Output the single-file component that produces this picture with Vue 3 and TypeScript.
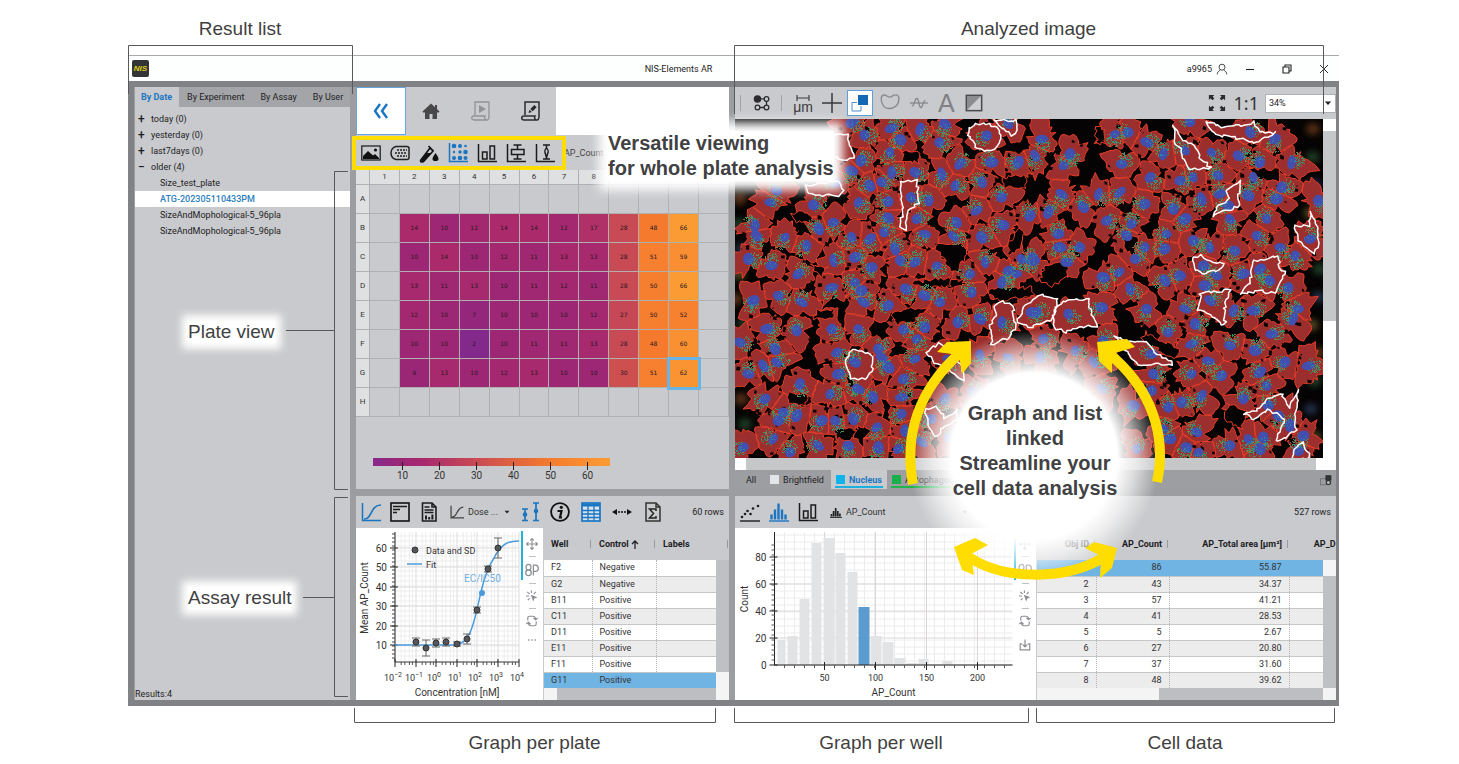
<script setup lang="ts">
type Point = [number, number]

/* ---------- icons (20 x 20 grid) ---------- */
const icons: Record<string, string> = {
  back: '<path d="M9 3 4 10l5 7M16 3l-5 7 5 7" fill="none" stroke="#1874c4" stroke-width="2.4"/>',
  home: '<path d="M10 2.5 1.5 10.5 3 12l1-1v7h4.500v-5h3v5H16v-7l1 1 1.500-1.500-2.500-2.400V4h-2v2.200z" fill="#48484a"/>',
  bookPlay: '<path d="M4 14V1h14v14M18 15c0 4-2 4-2 4H3c-3 0-3-4 0-4h11c-1 2 0 4 2 4" fill="none" stroke="#929395" stroke-width="1.300"/><path d="M8 4l7 4-7 4z" fill="#929395"/>',
  bookEdit: '<path d="M4 14V1h14v14M18 15c0 4-2 4-2 4H3c-3 0-3-4 0-4h11c-1 2 0 4 2 4" fill="none" stroke="#2c2c2e" stroke-width="1.500"/><path d="M7.500 12l1-3.200 2.400 2.300zM9.300 8l4-4 2.400 2.300-4 4z" fill="#2c2c2e"/>',
  picture: '<rect x=".8" y="3" width="18.400" height="14" fill="none" stroke="#222" stroke-width="1.300"/><path d="M2 16v-3l5-5 5 4.500 2-1.500 4 4v1z" fill="#111"/><circle cx="14.500" cy="7" r="1.600" fill="#111"/>',
  plate: '<path d="M6 3.500h11q2 0 2 2v9q0 2-2 2H6Q1 15 1 10t5-6.500z" fill="none" stroke="#222" stroke-width="1.500"/><path d="M7 7h10M5 10h12M7 13h10" stroke="#222" stroke-width="1.500" stroke-dasharray="2 1"/>',
  tube: '<path d="M9.500 3l5 5M1.500 17.500 11 5l3 3L4.500 18.500Q1.500 20 1.500 17.500z" fill="none" stroke="#111" stroke-width="1.600"/><path d="M2 17l6-7h4l-7.500 8q-2 1-2.500-1zM16.500 10q6 8 0 8t0-8z" fill="#111"/>',
  dots: '<path d="M1.500 0v18.500H20" fill="none" stroke="#1b76c2" stroke-width="1.500"/><g fill="#1b76c2"><circle cx="6" cy="3" r="2.300"/><circle cx="12" cy="3" r="2"/><circle cx="17.500" cy="3" r="1.300"/><circle cx="6" cy="9" r="1.200"/><circle cx="12" cy="9" r="1.700"/><circle cx="17.500" cy="9" r="2.300"/><circle cx="6" cy="15" r="2"/><circle cx="12" cy="15" r="2.300"/><circle cx="17.500" cy="15" r="2"/></g>',
  bars: '<path d="M1.500 1v17.500H20M5.500 16v-7h4.500v7zM13 16V3h4.500v13z" fill="none" stroke="#1c1c1e" stroke-width="1.500"/>',
  box: '<path d="M1.500 1v17.500H20M7.500 2h8M11.500 2v4M11.500 12v4M7.500 16h8M5.500 6.500h12.500v5H5.500z" fill="none" stroke="#1c1c1e" stroke-width="1.500"/>',
  violin: '<path d="M1.500 1v17.500H20M8 2h7M11.500 2v3c4 4 0 5 0 11M11.500 5c-4 4 0 5 0 11M8 16h7" fill="none" stroke="#1c1c1e" stroke-width="1.500"/>',
  curve: '<path d="M1.500 1v17.500H20" fill="none" stroke="#1b76c2" stroke-width="1.500"/><path d="M3 17c8 1 6-14 17-14" fill="none" stroke="#1b76c2" stroke-width="1.600"/>',
  curveGrey: '<path d="M1.500 1v17.500H20M3 17c8 1 6-14 16-14" fill="none" stroke="#444" stroke-width="1.800"/>',
  panel: '<rect x="1" y="1" width="18" height="18" fill="none" stroke="#1c1c1e" stroke-width="1.700"/><path d="M3 4.500h14M3 7.500h7M3 10.500h4" stroke="#1c1c1e" stroke-width="1.300"/>',
  report: '<path d="M3.500 1h9.500l4 4v14h-13.500zM13 1v4h4" fill="none" stroke="#1c1c1e" stroke-width="1.600"/><path d="M5.500 5h5M5.500 8h9M5.500 10.500h9" stroke="#1c1c1e" stroke-width="1.400"/><path d="M7 17.500v-4M10.200 17.500v-2.500M13.400 17.500v-5" stroke="#1c1c1e" stroke-width="2"/>',
  errors: '<g stroke="#1b76c2" stroke-width="1.700"><path d="M1 7h6M4 7v11M1 18.500h6M12 1h6M15 1v17M12 18.500h6"/></g><circle cx="4" cy="12.500" r="2.300" fill="#1b76c2"/><circle cx="15" cy="9" r="2.300" fill="#1b76c2"/>',
  info: '<circle cx="10" cy="10" r="8.900" fill="none" stroke="#111" stroke-width="1.800"/><circle cx="11.300" cy="5.300" r="1.600" fill="#111"/><path d="M7.500 9h4l-1.500 6.500h2" fill="none" stroke="#111" stroke-width="2.200"/>',
  grid: '<rect x="1" y="1" width="18" height="18" fill="#d5e3ef" stroke="#1b76c2" stroke-width="1.700"/><path d="M1 3h18" stroke="#1b76c2" stroke-width="3"/><path d="M1 8.500h18M1 12h18M1 15.500h18M7 4v15M13 4v15" stroke="#1b76c2" stroke-width="1.300"/>',
  arrows: '<path d="M3 10h14" stroke="#111" stroke-width="1.500" stroke-dasharray="2 1"/><path d="M0 10l5-3v6zM20 10l-5-3v6z" fill="#111"/>',
  sigma: '<path d="M3 1h10l4 4v14H3zM13 1v4h4" fill="none" stroke="#333" stroke-width="1.500"/><path d="M13 9V7H6.500l4 4.500-4 4.500H13v-2" fill="none" stroke="#222" stroke-width="1.500"/>',
  channels: '<circle cx="5" cy="5.500" r="4.200" fill="#2c2c2e"/><g fill="none" stroke="#2c2c2e" stroke-width="1.400"><circle cx="15" cy="5.500" r="2.600"/><circle cx="5" cy="15" r="2.600"/><circle cx="15" cy="15" r="2.600"/><path d="M7.600 15h4.800M15 8v4.400M9 5.500h3.500"/></g>',
  plus: '<path d="M10 0v20M0 10h20" stroke="#3a3a3c" stroke-width="1.500"/>',
  overlay: '<path d="M2 9.500v8.500h9v-5M2 9.500h5" fill="none" stroke="#4d8ecb" stroke-width="1"/><rect x="8" y="2" width="10" height="10" fill="#1467b3"/>',
  bean: '<path d="M2 3q2-2 5 0 3 2.500 6-.5 5-2 6 2.500 0 8-6.500 10Q6 17 3 12 0 6 2 3z" fill="none" stroke="#8a8b8e" stroke-width="1.400"/>',
  wave: '<path d="M0 10h20" stroke="#85868a" stroke-width="1.400"/><path d="M2 13c3 1 3-8 5.500-8 3 0 2 10 4.500 10s2-7 5-8" fill="none" stroke="#85868a" stroke-width="1.400"/>',
  contrast: '<rect x="1.500" y="1.500" width="17" height="17" fill="#cdced1" stroke="#4a4a4c" stroke-width="1.700"/><path d="M2.300 17.700V2.300h15.400z" fill="#8b8c8f"/>',
  expand: '<g fill="#2c2c2e"><path d="M1 1h6L5.300 3 7 5 5 7 3 5 1 6.500zM19 1v6l-2-1.700L15 7l-2-2 2-2-1.500-2zM1 19v-6l2 1.700L5 13l2 2-2 2 1.500 2zM19 19h-6l1.700-2L13 15l2-2 2 2 2-1.500z"/></g>',
  scatter: '<path d="M0 19h20" stroke="#1c1c1e" stroke-width="1.400"/><g fill="#1c1c1e"><circle cx="2" cy="15" r="1.300"/><circle cx="5" cy="12" r="1.300"/><circle cx="7.500" cy="9" r="1.300"/><circle cx="10.500" cy="12" r="1.300"/><circle cx="13" cy="6.500" r="1.300"/><circle cx="18" cy="4" r="1.300"/></g>',
  histo: '<path d="M0 19h20" stroke="#1b76c2" stroke-width="1.400"/><path d="M2.500 17.500v-5M6 17.500v-10M9.500 17.500v-16M13 17.500v-10M16.500 17.500v-5" stroke="#1b76c2" stroke-width="2.400"/>',
  histoDark: '<path d="M0 19h20" stroke="#222" stroke-width="1.600"/><path d="M2.500 17.500v-4M6 17.500v-9M9.500 17.500v-14M13 17.500v-9M16.500 17.500v-5" stroke="#222" stroke-width="2.800"/>',
  move: '<path d="M10 1v18M1 10h18M7 4l3-3 3 3M7 16l3 3 3-3M4 7l-3 3 3 3M16 7l3 3-3 3" fill="none" stroke="#8d8e92" stroke-width="1.800"/>',
  zoom: '<path d="M5 2q3.500 0 3.500 4T5 10 1.500 6 5 2zM5 10q4 0 4 4t-4 4-4-4 4-4zM12 18V3h3q4 0 4 4.500T15 12h-3" fill="none" stroke="#8d8e92" stroke-width="1.800"/>',
  click: '<path d="M9 1v4M2 3l4 4M0 10h5M3 17l3-3M16 3l-3 4" stroke="#8d8e92" stroke-width="1.900"/><path d="M8 8l11 4-5 2-2 5z" fill="#8d8e92"/>',
  refresh: '<path d="M3 9V5q0-3 3-3h5q5 0 5 5M12.500 5l3.500 3 3.500-3M17 11v4q0 3-3 3H9q-5 0-5-5M.500 15l3.500-3 3.500 3" fill="none" stroke="#8d8e92" stroke-width="1.900"/>',
  more: '<path d="M2 10h3M8.500 10h3M15 10h3" stroke="#66676a" stroke-width="2"/>',
  download: '<path d="M5 8H2v10h16V8h-3M10 1v12M6 9l4 4 4-4" fill="none" stroke="#8d8e92" stroke-width="2"/>',
  user: '<circle cx="10" cy="7" r="5" fill="none" stroke="#333" stroke-width="1.500"/><path d="M2 19c0-4 3-6 5-7M18 19c0-4-3-6-5-7" fill="none" stroke="#333" stroke-width="1.500"/>',
  min: '<path d="M2 11h16" stroke="#222" stroke-width="2.200"/>',
  restore: '<path d="M2 6h12v12H2zM6 6V2h12v12h-4" fill="none" stroke="#222" stroke-width="2.200"/>',
  close: '<path d="M2 2l16 16M18 2 2 18" stroke="#222" stroke-width="1.900"/>',
  caret: '<path d="M2 6h16l-8 9z" fill="#222"/>',
  layers: '<rect x="1" y="8" width="10" height="10" fill="none" stroke="#66676a" stroke-width="1.200"/><path d="M9 2h10v9H9z" fill="#333"/><circle cx="14" cy="14" r="3.500" fill="#bbb" stroke="#333" stroke-width="2"/>'
}

/* ---------- result list ---------- */
const tabs = ['By Date', 'By Experiment', 'By Assay', 'By User']
const groups = [
  { mark: '+', name: 'today (0)' },
  { mark: '+', name: 'yesterday (0)' },
  { mark: '+', name: 'last7days (0)' },
  { mark: '−', name: 'older (4)' }
]
const results = ['Size_test_plate', 'ATG-202305110433PM', 'SizeAndMophological-5_96pla', 'SizeAndMophological-5_96pla']

/* ---------- plate ---------- */
const viewTools = ['picture', 'plate', 'tube', 'dots', 'bars', 'box', 'violin']
const wells: Record<string, number[]> = {
  A: [],
  B: [14, 10, 12, 14, 14, 12, 17, 28, 48, 66],
  C: [10, 14, 10, 12, 11, 13, 13, 28, 51, 59],
  D: [13, 11, 13, 10, 11, 12, 11, 28, 50, 66],
  E: [12, 10, 7, 10, 10, 10, 12, 27, 50, 52],
  F: [10, 10, 2, 10, 11, 11, 13, 28, 48, 60],
  G: [9, 13, 10, 12, 13, 10, 10, 30, 51, 62],
  H: []
}
const scale: [number, number[]][] = [
  [2, [132, 41, 140]],
  [9, [154, 38, 118]],
  [14, [170, 42, 108]],
  [28, [200, 74, 84]],
  [48, [245, 122, 46]],
  [66, [251, 155, 52]]
]
function wellColour(v: number): string {
  for (let i = 1; i < scale.length; i++) {
    const [hi, b] = scale[i]
    const [lo, a] = scale[i - 1]
    if (v <= hi) {
      const t = (v - lo) / (hi - lo)
      return `rgb(${a.map((c, k) => Math.round(c + (b[k] - c) * t)).join(',')})`
    }
  }
  return 'rgb(251,155,52)'
}
const wellAt = (row: string, col: number): number | undefined => (col > 1 ? wells[row][col - 2] : undefined)
const legendTicks = [10, 20, 30, 40, 50, 60]

/* ---------- tables ---------- */
const controls = [
  ['F2', 'Negative'], ['G2', 'Negative'], ['B11', 'Positive'], ['C11', 'Positive'],
  ['D11', 'Positive'], ['E11', 'Positive'], ['F11', 'Positive'], ['G11', 'Positive']
]
const cellRows = [
  [86, '55.87'], [43, '34.37'], [57, '41.21'], [41, '28.53'],
  [5, '2.67'], [27, '20.80'], [37, '31.60'], [48, '39.62']
]

/* ---------- charts ---------- */
const decades = [-2, -1, 0, 1, 2, 3, 4].map((e, i) => ({ e, x: 39 + Math.round(i * 20.6) }))
const minor = decades.slice(0, 6).flatMap(d => [2, 3, 5, 7].map(m => d.x + Math.log10(m) * 20.6))
const doseTicks = [60, 50, 40, 30, 20, 10].map((v, i) => ({ v, y: 20 + Math.round(i * 19.4) }))
const dosePoints = [
  [60, 114, 4], [70, 120, 8], [80, 115, 4], [90, 114, 4], [101, 116, 2],
  [111, 111, 5], [121, 82, 3], [132, 41, 3], [142, 20, 10]
]
const bars = [
  [42, 112, 8], [52, 108, 10], [64, 71, 10], [76, 15, 10], [88, 10, 11], [100, 25, 10], [112, 44, 10],
  [135, 108, 11], [147, 114, 11], [159, 130, 11], [171, 135, 11], [183, 131, 10], [207, 133, 10]
]
const countTicks = [0, 20, 40, 60, 80].map((v, i) => ({ v, y: 137 - i * 27 }))
const apTicks = [50, 100, 150, 200].map((v, i) => ({ v, x: 89 + i * 51 }))

/* ---------- fluorescence field ---------- */
let seed = 20230511
const rnd = (): number => {
  seed = (seed * 1664525 + 1013904223) >>> 0
  return seed / 4294967296
}
const west = '350,10 388,48 468,28 555,30 630,15 497,62 613,70 755,50 820,15 465,100 540,160 620,165 675,135 770,130 850,130 350,155 378,125 405,200 440,190 470,160 460,248 528,235 582,245 660,200 742,190 800,235 885,290 725,275 545,300 460,297 370,250 300,190 235,258 105,250 125,215 60,320 65,350 150,355 215,380 295,310 252,330 350,355 405,360 447,340 570,345 655,352 665,310 740,355 805,318 40,420 110,440 190,465 295,425 360,415 410,445 480,390 495,425 540,430 605,440 705,465 750,430 860,420 820,455 895,420 800,490 845,465 55,545 130,530 200,550 290,505 360,490 380,515 385,550 460,560 512,510 568,530 615,550 710,520 95,630 185,635 290,630 370,630 505,632 570,625 668,610 735,600 800,610 890,580 15,670 120,690 305,700 360,730 430,690 440,715 540,720 545,660 640,720 735,708 820,715 40,765 85,740 125,730 195,795 310,765 505,780 460,745 285,825 370,810 415,835 500,835 630,840 715,820 90,840 145,880 185,890 130,905 260,905 300,905 355,900 425,925 500,885 510,935 590,900 560,970 640,955 25,985 115,960 165,1000 250,980 340,980 430,985 490,990'
const east = '35,60 15,110 120,105 100,140 255,45 295,40 350,70 480,8 660,40 735,60 400,105 275,135 465,95 545,100 625,110 690,130 785,130 360,175 450,185 490,175 565,170 670,175 95,225 205,225 270,220 160,265 55,280 345,255 430,270 515,240 570,225 595,260 655,230 755,205 740,240 865,245 230,305 305,315 465,300 600,300 710,300 410,345 290,350 490,365 680,350 840,360 85,345 90,385 150,385 10,425 345,385 405,390 315,420 540,385 615,395 750,385 795,410 110,430 220,475 268,460 450,470 405,485 520,440 560,470 640,465 690,450 720,485 775,505 300,510 525,500 350,570 465,570 540,545 610,575 670,575 805,570 790,600 20,580 115,585 215,565 415,640 495,615 725,645 220,665 365,705 485,675 600,680 675,695 535,725 765,730 835,740 40,660 135,695 30,715 190,730 370,765 485,765 575,770 690,760 215,810 310,860 415,865 455,850 515,830 640,840 710,800 365,815 715,860 745,890 780,920 320,990 420,960 400,930 500,940 470,985 505,1000 600,980 655,960 700,955 690,990 820,950 805,995'
const parse = (s: string, dx: number): Point[] =>
  s.split(' ').map(p => {
    const [x, y] = p.split(',').map(Number)
    return [(x + dx) / 3, y / 3] as Point
  })
const nuclei: Point[] = [...parse(west, 0), ...parse(east, 885)]

const toPath = (pts: Point[]): string => 'M' + pts.map(p => `${p[0].toFixed(1)} ${p[1].toFixed(1)}`).join('L') + 'Z'

function cellShape([cx, cy]: Point): string {
  const near = nuclei.filter(([x, y]) => (x !== cx || y !== cy) && Math.hypot(x - cx, y - cy) < 70)
  const n = 44
  const phase = rnd() * 6
  const skew = rnd() * 6
  const pts: Point[] = []
  for (let i = 0; i < n; i++) {
    const a = (i / n) * Math.PI * 2
    const ux = Math.cos(a)
    const uy = Math.sin(a)
    let r = 16 + 4 * Math.sin(a * 2 + phase) + 4 * Math.sin(a * 3 + skew) + 2 * Math.sin(a * 7 + phase)
    if (rnd() < 0.12) r += 5
    for (const [x, y] of near) {
      const dot = (x - cx) * ux + (y - cy) * uy
      if (dot > 0) r = Math.min(r, ((x - cx) ** 2 + (y - cy) ** 2) / 2 / dot)
    }
    r += (rnd() - 0.5) * 1.8
    pts.push([cx + ux * r, cy + uy * r])
  }
  return toPath(pts)
}
const bodies = nuclei.map(cellShape).join('')

const cores = nuclei.map(([x, y]) => ({
  x, y,
  rx: 5 + rnd() * 2,
  ry: 4 + rnd() * 1.5,
  rot: Math.round(rnd() * 180)
}))

/* each cell keeps its organelles on one side of the nucleus */
const sides = nuclei.map(() => rnd() * Math.PI * 2)
function speckle(count: number, spread: number, off: number): string {
  let d = ''
  nuclei.forEach(([x, y], k) => {
    for (let i = 0; i < count; i++) {
      const a = rnd() * Math.PI * 2
      const r = Math.sqrt(rnd()) * spread
      d += `M${Math.round(x + Math.cos(sides[k]) * off + Math.cos(a) * r)} ${Math.round(y + Math.sin(sides[k]) * off + Math.sin(a) * r)}h1v1h-1z`
    }
  })
  return d
}
const greenDots = speckle(75, 8, 5)
const tealDots = speckle(16, 5, 4)
const tanDots = speckle(14, 8, 6)
const blackDots = (() => {
  let d = ''
  for (let i = 0; i < 620; i++) {
    const [x, y] = nuclei[Math.floor(rnd() * nuclei.length)]
    const a = rnd() * 6.28
    const px = x + Math.cos(a) * 14
    const py = y + Math.sin(a) * 14
    const w = 1 + rnd() * 3
    d += `M${px.toFixed(1)} ${py.toFixed(1)}l${w.toFixed(1)} ${(rnd() * 3 - 1).toFixed(1)} ${(rnd() * 2 - 1).toFixed(1)} ${(w * 0.9).toFixed(1)} ${(-w).toFixed(1)} ${(rnd() - 1).toFixed(1)}z`
  }
  return d
})()

/* empty patches between the cells */
const gapSource = [
  '600,380 680,368 700,400 668,460 640,450 620,410',
  '535,490 640,475 650,500 570,510',
  '470,580 520,570 585,565 540,605 480,615',
  '760,512 890,505 900,530 780,545',
  '800,175 870,172 870,205 805,205',
  '500,100 552,98 550,130 505,130',
  '160,820 222,830 212,860 165,850',
  '170,280 220,280 230,310 180,310',
  '300,935 370,930 350,960 305,960',
  '820,380 850,325 868,345 855,395 825,410',
  '440,840 465,850 465,910 445,900',
  '240,575 300,570 290,600 240,598',
  '395,402 455,392 440,412 395,415',
  '225,435 275,445 265,475 240,460',
  '935,440 990,420 1000,470 950,500 915,480',
  '1160,330 1210,360 1200,420 1165,390',
  '1230,640 1330,690 1320,720 1280,700 1220,660',
  '1480,850 1530,880 1520,935 1470,900',
  '1540,150 1640,150 1630,185 1560,180',
  '1080,20 1110,30 1110,75 1085,70'
]
function roughen(pts: Point[], amount: number): Point[] {
  const out: Point[] = []
  pts.forEach((p, i) => {
    const q = pts[(i + 1) % pts.length]
    const steps = Math.max(2, Math.round(Math.hypot(q[0] - p[0], q[1] - p[1]) / 3))
    for (let s = 0; s < steps; s++) {
      const t = s / steps
      out.push([p[0] + (q[0] - p[0]) * t + (rnd() - 0.5) * amount, p[1] + (q[1] - p[1]) * t + (rnd() - 0.5) * amount])
    }
  })
  return out
}
const gaps = gapSource.map(s => toPath(roughen(parse(s, 0), 4))).join('')

/* cells picked out by the current selection */
const pickedSource = [
  '700,30 720,12 755,15 790,25 800,60 785,80 760,98 730,90 712,70 698,45',
  '775,3 845,5 848,35 830,48 800,25',
  '500,190 545,180 550,255 520,275 510,330 493,325 508,265 498,235',
  '290,40 340,50 348,85 362,112 320,125 290,110',
  '215,200 260,190 315,190 325,215 310,230 250,228 220,225',
  '780,555 800,545 835,560 832,590 843,630 820,655 765,678 775,650 765,620 780,590',
  '850,600 870,555 920,530 965,535 970,560 950,600 890,625 850,610',
  '968,560 1000,540 1060,540 1070,590 1085,625 1030,620 990,640 960,625 955,590',
  '330,725 345,695 380,695 415,712 410,760 395,780 350,780 340,745',
  '575,700 610,675 650,700 680,740 685,785 650,760 600,730',
  '570,870 600,865 630,895 665,875 670,900 625,925 600,955 580,920 575,890',
  '1315,20 1332,40 1345,65 1380,80 1395,115 1425,148 1360,150 1340,100 1320,70',
  '1410,5 1465,25 1510,20 1560,10 1570,35 1620,42 1565,70 1515,60 1460,50 1430,35',
  '1475,210 1515,185 1510,230 1510,265 1470,275 1435,290 1450,260 1480,245',
  '1680,320 1720,320 1730,280 1745,330 1750,385 1735,405 1695,370',
  '1370,415 1395,408 1425,425 1470,435 1445,455 1400,465 1375,445',
  '1555,425 1630,412 1635,450 1650,455 1640,490 1620,525 1580,515 1515,525 1545,490',
  '1395,525 1430,520 1485,512 1470,560 1470,620 1440,595 1390,570',
  '1140,652 1175,665 1235,670 1265,705 1315,735 1260,735 1210,740 1175,700 1155,675',
  '1530,885 1570,870 1600,835 1640,822 1660,865 1690,815 1680,880 1685,930 1650,960 1620,965 1650,900 1600,870 1560,900',
  '1670,1022 1680,985 1700,972 1720,1000 1722,1022'
]
const picked = pickedSource.map(s => toPath(roughen(parse(s, 0), 3))).join('')

const debris = Array.from({ length: 22 }, (_, i) => ({
  x: i < 12 ? 575 + rnd() * 12 : rnd() * 14,
  y: i < 12 ? 10 + i * 28 : 80 + (i - 12) * 25,
  c: ['#8a4a22', '#2e5f3a', '#31466f', '#7c6a30'][i % 4]
}))
</script>

<template>
  <main class="figure">
    <div class="caps top">
      <span class="c2">Result list</span>
      <span class="c4">Analyzed image</span>
    </div>

    <div class="stage">
      <section class="window">
        <header class="titlebar">
          <span class="logo">NIS</span>
          <h1>NIS-Elements AR</h1>
          <div class="who">
            <span>a9965</span>
            <svg class="i12" viewBox="0 0 20 20" v-html="icons.user" />
            <button aria-label="Minimize"><svg class="i10" viewBox="0 0 20 20" v-html="icons.min" /></button>
            <button aria-label="Restore"><svg class="i10" viewBox="0 0 20 20" v-html="icons.restore" /></button>
            <button aria-label="Close"><svg class="i10" viewBox="0 0 20 20" v-html="icons.close" /></button>
          </div>
        </header>

        <div class="body">
          <aside class="side">
            <nav class="tabs">
              <button v-for="(t, i) in tabs" :key="t" :class="{ on: i === 0 }">{{ t }}</button>
            </nav>
            <ul class="tree">
              <li v-for="g in groups" :key="g.name"><b>{{ g.mark }}</b>{{ g.name }}</li>
              <li v-for="(r, i) in results" :key="i" class="leaf" :class="{ picked: i === 1 }">{{ r }}</li>
            </ul>
            <p class="total">Results:4</p>
          </aside>

          <div class="column">
            <section class="panel plate">
              <div class="nav">
                <button class="on" aria-label="Back"><svg class="i20" viewBox="0 0 20 20" v-html="icons.back" /></button>
                <button aria-label="Home"><svg class="i20" viewBox="0 0 20 20" v-html="icons.home" /></button>
                <button aria-label="Run"><svg class="i20" viewBox="0 0 20 20" v-html="icons.bookPlay" /></button>
                <button aria-label="Edit"><svg class="i20" viewBox="0 0 20 20" v-html="icons.bookEdit" /></button>
                <div class="blank" />
              </div>
              <div class="tools views">
                <button v-for="t in viewTools" :key="t" :aria-label="t">
                  <svg class="i20" viewBox="0 0 20 20" v-html="icons[t]" />
                </button>
                <span class="feature">AP_Count</span>
              </div>
              <table class="wells">
                <thead>
                  <tr><th class="rowhead" /><th v-for="c in 12" :key="c">{{ c < 9 ? c : '' }}</th></tr>
                </thead>
                <tbody>
                  <tr v-for="(_, row) in wells" :key="row">
                    <th class="rowhead">{{ row }}</th>
                    <td
                      v-for="c in 12"
                      :key="c"
                      :class="{ sel: row === 'G' && c === 11 }"
                      :style="wellAt(row, c) === undefined ? undefined : { background: wellColour(wellAt(row, c)!) }"
                    >{{ wellAt(row, c) }}</td>
                  </tr>
                </tbody>
              </table>
              <div class="legend">
                <div class="ramp" />
                <div class="ticks"><span v-for="t in legendTicks" :key="t">{{ t }}</span></div>
              </div>
            </section>

            <section class="panel result">
              <div class="tools dose">
                <button aria-label="Curve"><svg class="i20" viewBox="0 0 20 20" v-html="icons.curve" /></button>
                <button aria-label="Panel"><svg class="i20" viewBox="0 0 20 20" v-html="icons.panel" /></button>
                <button aria-label="Report"><svg class="i20" viewBox="0 0 20 20" v-html="icons.report" /></button>
                <label class="drop">
                  <svg class="i14" viewBox="0 0 20 20" v-html="icons.curveGrey" />
                  <select aria-label="Model"><option>Dose ...</option></select>
                  <svg class="i6" viewBox="0 0 20 20" v-html="icons.caret" />
                </label>
                <button aria-label="Error bars"><svg class="i20" viewBox="0 0 20 20" v-html="icons.errors" /></button>
                <button aria-label="Info"><svg class="i20" viewBox="0 0 20 20" v-html="icons.info" /></button>
                <button aria-label="Table" class="wide"><svg class="i20" viewBox="0 0 20 20" v-html="icons.grid" /></button>
                <button aria-label="Fit columns" class="wide"><svg class="i20" viewBox="0 0 20 20" v-html="icons.arrows" /></button>
                <button aria-label="Statistics" class="wide"><svg class="i20" viewBox="0 0 20 20" v-html="icons.sigma" /></button>
                <span class="count">60 rows</span>
              </div>
              <div class="split dose-split">
                <div class="plot">
                  <svg class="chart" viewBox="0 0 165 172">
                    <g stroke="#ededee">
                      <path v-for="x in minor" :key="x" :d="`M${x} 4V134`" />
                      <path v-for="y in 25" :key="y" :d="`M39 ${y * 5 + 3}H163`" />
                    </g>
                    <g stroke="#dcdcde">
                      <path v-for="d in decades" :key="d.e" :d="`M${d.x} 4V134`" />
                      <path v-for="t in doseTicks" :key="t.v" :d="`M39 ${t.y}H163`" />
                    </g>
                    <path d="M39 4V134H163" fill="none" stroke="#333" />
                    <path v-for="y in 32" :key="y" :d="`M36 ${y * 4 + 2}h3`" stroke="#444" />
                    <path v-for="x in minor" :key="x" :d="`M${x} 134v3`" stroke="#555" />
                    <g v-for="t in doseTicks" :key="t.v">
                      <path :d="`M34 ${t.y}h8`" stroke="#222" />
                      <text x="31" :y="t.y + 4" text-anchor="end">{{ t.v }}</text>
                    </g>
                    <g v-for="d in decades" :key="d.e">
                      <path :d="`M${d.x} 131v8`" stroke="#222" />
                      <text :x="d.x - 2" y="153" text-anchor="middle" class="small">10<tspan dy="-4" class="sup">{{ String(d.e).replace('-', '−') }}</tspan></text>
                    </g>
                    <path d="M39 117H98C124 117 118 60 138 30C146 14 154 13 163 13" fill="none" stroke="#4b9bdb" stroke-width="1.500" />
                    <g v-for="p in dosePoints" :key="p[0]" stroke="#666">
                      <path :d="`M${p[0]} ${p[1] - p[2]}v${p[2] * 2}M${p[0] - 4} ${p[1] - p[2]}h8M${p[0] - 4} ${p[1] + p[2]}h8`" />
                      <circle :cx="p[0]" :cy="p[1]" r="3" fill="#55565a" stroke="#333" />
                    </g>
                    <circle cx="126" cy="65" r="3" fill="#4b9bdb" />
                    <text x="108" y="54" class="ec">EC/IC50</text>
                    <circle cx="59" cy="22" r="3" fill="#55565a" stroke="#333" />
                    <text x="70" y="26" class="small">Data and SD</text>
                    <path d="M51 36h15" stroke="#4b9bdb" stroke-width="1.500" />
                    <text x="70" y="40" class="small">Fit</text>
                    <text x="101" y="168" text-anchor="middle">Concentration [nM]</text>
                    <text transform="translate(12 70) rotate(-90)" text-anchor="middle">Mean AP_Count</text>
                  </svg>
                  <div class="marks">
                    <svg class="i12" viewBox="0 0 20 20" v-html="icons.move" />
                    <hr>
                    <svg class="i14" viewBox="0 0 20 20" v-html="icons.zoom" />
                    <hr>
                    <svg class="i12" viewBox="0 0 20 20" v-html="icons.click" />
                    <hr>
                    <svg class="i12" viewBox="0 0 20 20" v-html="icons.refresh" />
                    <svg class="i10" viewBox="0 0 20 20" v-html="icons.more" />
                  </div>
                </div>
                <div class="grid">
                  <table class="data">
                    <colgroup><col class="w48"><col class="w64"><col></colgroup>
                    <thead><tr><th>Well</th><th>Control <svg class="up" viewBox="0 0 8 9"><path d="M4 9V1M1 4l3-3 3 3" fill="none" stroke="#222" stroke-width="1.300" /></svg></th><th>Labels</th></tr></thead>
                    <tbody>
                      <tr v-for="(r, i) in controls" :key="r[0]" :class="{ hit: i === 7 }">
                        <td>{{ r[0] }}</td><td>{{ r[1] }}</td><td />
                      </tr>
                    </tbody>
                  </table>
                  <div class="vbar low"><i /></div>
                  <div class="hbar left"><i /></div>
                </div>
              </div>
            </section>
          </div>

          <div class="column">
            <section class="panel image">
              <div class="tools imaging">
                <i class="sep" />
                <button aria-label="Channels"><svg class="i18" viewBox="0 0 20 20" v-html="icons.channels" /></button>
                <i class="sep" />
                <button class="um" aria-label="Scale bar"><svg class="i18 um-bar" viewBox="0 0 18 8"><path d="M1 0v8M17 0v8M1 4h16" stroke="#3a3a3c" stroke-width="1.500" /></svg>μm</button>
                <button aria-label="Crosshair"><svg class="i20" viewBox="0 0 20 20" v-html="icons.plus" /></button>
                <button class="boxed" aria-label="Overlay"><svg class="i20" viewBox="0 0 20 20" v-html="icons.overlay" /></button>
                <button aria-label="Region"><svg class="i20" viewBox="0 0 20 20" v-html="icons.bean" /></button>
                <button aria-label="Profile"><svg class="i18" viewBox="0 0 20 20" v-html="icons.wave" /></button>
                <button class="letter">A</button>
                <button aria-label="Contrast"><svg class="i18" viewBox="0 0 20 20" v-html="icons.contrast" /></button>
                <span class="grow" />
                <button aria-label="Fit"><svg class="i18" viewBox="0 0 20 20" v-html="icons.expand" /></button>
                <button class="one">1:1</button>
                <label class="pct">
                  <select aria-label="Magnification"><option>34%</option></select>
                  <svg class="i8" viewBox="0 0 20 20" v-html="icons.caret" />
                </label>
              </div>
              <div class="viewport">
                <svg class="field" viewBox="0 0 588 339" preserveAspectRatio="xMidYMid slice" role="img" aria-label="Analyzed cells">
                  <defs><filter id="soft"><feGaussianBlur stdDeviation="3" /></filter></defs>
                  <rect width="588" height="339" fill="#050303" />
                  <g filter="url(#soft)" opacity=".6">
                    <ellipse v-for="(b, i) in debris" :key="i" :cx="b.x" :cy="b.y" rx="7" ry="6" :fill="b.c" />
                  </g>
                  <path :d="bodies" fill="#9c2e2d" stroke="#e83e28" stroke-linejoin="round" />
                  <path :d="blackDots" fill="#0a0404" />
                  <path :d="gaps" fill="#050303" stroke="#e83e28" />
                  <path :d="picked" fill="#9c2e2d" />
                  <path :d="greenDots" fill="#3f8f62" />
                  <path :d="tanDots" fill="#8f8348" />
                  <ellipse v-for="(c, i) in cores" :key="i" :rx="c.rx" :ry="c.ry" fill="#434fae" :transform="`translate(${c.x} ${c.y}) rotate(${c.rot})`" />
                  <path :d="tealDots" fill="#2f86a0" />
                  <path :d="picked" fill="none" stroke="#fff" stroke-width="1.500" stroke-linejoin="round" />
                </svg>
                <div class="scroll-v"><i /></div>
              </div>
              <div class="scroll-h"><i /></div>
              <div class="layers">
                <button class="all">All</button>
                <button><i class="sw pale" />Brightfield</button>
                <button class="on"><i class="sw cyan" />Nucleus</button>
                <button class="auto"><i class="sw green" />Autophagosomes</button>
                <span class="grow" />
                <svg class="i12" viewBox="0 0 20 20" v-html="icons.layers" />
              </div>
            </section>

            <section class="panel result">
              <div class="tools hist">
                <button aria-label="Scatter"><svg class="i20" viewBox="0 0 20 20" v-html="icons.scatter" /></button>
                <button aria-label="Histogram"><svg class="i20" viewBox="0 0 20 20" v-html="icons.histo" /></button>
                <button aria-label="Bars"><svg class="i20" viewBox="0 0 20 20" v-html="icons.bars" /></button>
                <label class="drop">
                  <svg class="i12" viewBox="0 0 20 20" v-html="icons.histoDark" />
                  <select aria-label="Feature"><option>AP_Count</option></select>
                  <svg class="i6" viewBox="0 0 20 20" v-html="icons.caret" />
                </label>
                <button aria-label="Axes"><svg class="i20" viewBox="0 0 20 20" v-html="icons.bars" /></button>
                <span class="count">527 rows</span>
              </div>
              <div class="split hist-split">
                <div class="plot">
                  <svg class="chart" viewBox="0 0 278 172">
                    <g stroke="#ececed">
                      <path v-for="x in 23" :key="x" :d="`M${x * 10 + 39} 4V137`" />
                      <path v-for="y in 19" :key="y" :d="`M39 ${y * 7}H277`" />
                    </g>
                    <g stroke="#dbd7d8">
                      <path v-for="t in apTicks" :key="t.v" :d="`M${t.x} 4V137`" />
                      <path v-for="t in countTicks" :key="t.v" :d="`M39 ${t.y}H277`" />
                    </g>
                    <rect v-for="b in bars" :key="b[0]" :x="b[0]" :y="b[1]" :width="b[2]" :height="137 - b[1]" fill="#e2e3e4" />
                    <rect x="123" y="79" width="11" height="58" fill="#5b9bd0" />
                    <path d="M39 4V137H277" fill="none" stroke="#222" />
                    <path v-for="y in 24" :key="y" :d="`M36 ${137 - y * 5}h3`" stroke="#555" />
                    <path v-for="x in 23" :key="x" :d="`M${x * 10 + 39} 137v3`" stroke="#555" />
                    <g v-for="t in countTicks" :key="t.v">
                      <path :d="`M34 ${t.y}h8`" stroke="#222" />
                      <text x="31" :y="t.y + 4" text-anchor="end">{{ t.v }}</text>
                    </g>
                    <g v-for="t in apTicks" :key="t.v">
                      <path :d="`M${t.x} 134v8`" stroke="#222" />
                      <text :x="t.x" y="153" text-anchor="middle" class="small">{{ t.v }}</text>
                    </g>
                    <text x="158" y="168" text-anchor="middle">AP_Count</text>
                    <text transform="translate(12 71) rotate(-90)" text-anchor="middle">Count</text>
                  </svg>
                  <div class="marks">
                    <svg class="i12" viewBox="0 0 20 20" v-html="icons.move" />
                    <hr>
                    <svg class="i14" viewBox="0 0 20 20" v-html="icons.zoom" />
                    <hr>
                    <svg class="i12" viewBox="0 0 20 20" v-html="icons.click" />
                    <hr>
                    <svg class="i12" viewBox="0 0 20 20" v-html="icons.refresh" />
                    <svg class="i12" viewBox="0 0 20 20" v-html="icons.download" />
                  </div>
                </div>
                <div class="grid">
                  <table class="data num">
                    <colgroup><col class="w59"><col class="w73"><col class="w120"><col></colgroup>
                    <thead><tr><th>Obj ID</th><th>AP_Count</th><th>AP_Total area [μm²]</th><th class="cut">AP_D</th></tr></thead>
                    <tbody>
                      <tr v-for="(r, i) in cellRows" :key="i" :class="{ hit: i === 0 }">
                        <td>{{ i + 1 }}</td><td>{{ r[0] }}</td><td>{{ r[1] }}</td><td />
                      </tr>
                    </tbody>
                  </table>
                  <div class="vbar high"><i /></div>
                  <div class="hbar right"><i /></div>
                </div>
              </div>
            </section>
          </div>
        </div>
      </section>
    </div>

    <div class="caps bottom">
      <span class="b2">Graph per plate</span>
      <span class="b4">Graph per well</span>
      <span class="b6">Cell data</span>
    </div>

    <div class="notes">
      <p class="glow wide-note">Versatile viewing<br>for whole plate analysis</p>
      <p class="glow tag plate-tag">Plate view</p>
      <p class="glow tag assay-tag">Assay result</p>
      <svg class="lines" viewBox="0 0 1459 764" preserveAspectRatio="none">
        <defs>
          <radialGradient id="halo">
            <stop offset="0.660" stop-color="#fff" />
            <stop offset="0.800" stop-color="#fff" stop-opacity=".65" />
            <stop offset="1" stop-color="#fff" stop-opacity="0" />
          </radialGradient>
        </defs>
        <circle cx="1034" cy="456" r="126" fill="url(#halo)" />
        <g fill="none" stroke="#58595b">
          <path d="M128.500 94V45.500H352.500V94M734.500 114V45.500H1323.500V114" />
          <path d="M348 171.500H334.500V489.500H348M286 330.500H334M348 497.500H334.500V696.500H348M303 597.500H334" />
          <path d="M354.500 708V722.500H715.500V708M734.500 708V722.500H1028.500V708M1036.500 708V722.500H1334.500V708" />
        </g>
        <rect x="354" y="138" width="210" height="30" fill="none" stroke="#fd0" stroke-width="4" />
        <g fill="none" stroke="#fd0" stroke-width="10">
          <path d="M913 484C904 436 918 390 961 352" />
          <path d="M1157 482C1167 436 1152 388 1107 352" />
          <path d="M966 555C1000 580 1065 582 1106 556" />
        </g>
        <g fill="#fd0">
          <path d="M947 342l24-1v22l-9 11-3-19-22-3z" />
          <path d="M1097 342l30-3 8 8-23 7v19l-13-12z" />
          <path d="M954 547l21-9 13 7-17 9 3 21-12-5z" />
          <path d="M1117 548l-23-6-9 6 16 8-1 22 12-10z" />
        </g>
      </svg>
      <p class="link-note">Graph and list<br>linked<br>Streamline your<br>cell data analysis</p>
    </div>
  </main>
</template>

<style>
body { margin: 0; background: #fff; }
</style>

<style scoped>
.figure { position: relative; font-family: Roboto, "Noto Sans", sans-serif; font-size: 9px; color: #1d1d1f; overflow: hidden; }
button, select { font: inherit; color: inherit; border: 0; background: none; padding: 0; margin: 0; appearance: none; }
button { display: flex; align-items: center; justify-content: center; flex: none; }
svg { display: block; flex: none; }
p, h1, ul { margin: 0; padding: 0; }
.i6 { width: 6px; height: 6px; }
.i8 { width: 8px; height: 8px; }
.i10 { width: 10px; height: 10px; }
.i12 { width: 12px; height: 12px; }
.i14 { width: 14px; height: 14px; }
.i18 { width: 18px; height: 18px; }
.i20 { width: 20px; height: 20px; }
.grow { flex: 1; }

.caps { display: grid; font: 19px/22px "Liberation Sans", Arial, sans-serif; color: #3f3f41; text-align: center; white-space: nowrap; }
.top { grid-template-columns: 128fr 224fr 382fr 589fr 136fr; padding: 18px 0 15px; }
.bottom { grid-template-columns: 354fr 361fr 19fr 294fr 8fr 298fr 125fr; padding: 26px 0 10px; }
.c2, .b2 { grid-column: 2; }
.c4, .b4 { grid-column: 4; }
.b6 { grid-column: 6; }

.stage { display: grid; grid-template-columns: 128fr 1211fr 120fr; }
.window { grid-column: 2; min-width: 0; border-top: 1px solid #a7a9ac; }
.titlebar { display: grid; grid-template-columns: 1fr auto 1fr; align-items: center; height: 25px; padding: 0 10px 0 4px; background: #fdfefe; }
.logo { width: 17px; height: 17px; border-radius: 2px; background: #333436; color: #e2d21c; font: italic bold 8px/17px "Liberation Sans", Arial, sans-serif; text-align: center; }
.titlebar h1 { font-size: 9px; font-weight: 400; padding-right: 104px; }
.who { display: flex; align-items: center; justify-content: flex-end; gap: 4px; }
.who button { margin-left: 23px; }
.who svg + button { margin-left: 13px; }

.body { display: grid; grid-template-columns: 215fr 373fr 601fr; gap: 6px; padding: 6px 3px 6px 7px; background: #9b9da0; box-shadow: inset 0 6px #808285, inset 0 -6px #808285, inset 6px 0 #808285, inset -3px 0 #808285; }
.side { display: flex; flex-direction: column; min-width: 0; background: #c9cacd; }
.tabs { display: flex; height: 20px; background: #a3a5a8; }
.tabs button { padding: 0 8px; white-space: nowrap; }
.tabs .on { padding: 0 7px 0 6px; background: #c9cacd; color: #1b76c2; font-weight: 700; }
.tree { list-style: none; padding-top: 4px; }
.tree li { height: 16px; line-height: 16px; padding-left: 3px; display: flex; white-space: nowrap; }
.tree b { width: 13px; font-size: 12px; font-weight: 500; }
.tree .leaf { padding-left: 25px; }
.tree .picked { background: #fff; color: #2d7fc0; font-weight: 500; }
.total { margin-top: auto; line-height: 11px; }

.column { display: grid; grid-template-rows: auto auto; gap: 7px; min-width: 0; }
.panel { min-width: 0; background: #c9cacd; }
.plate { display: flex; flex-direction: column; }
.nav { display: flex; height: 48px; }
.nav button { width: 50px; }
.nav .on { background: #fff; box-shadow: inset 0 0 0 1px #6aa5da; }
.nav .blank { flex: 1; background: #fff; }
.tools { display: flex; align-items: center; }
.views { height: 35px; padding-left: 5px; gap: 9px; }
.feature { color: #444; }
.wells { width: 100%; table-layout: fixed; border-collapse: separate; border-spacing: 0; }
.wells th, .wells td { height: 29px; padding: 0; box-sizing: border-box; border: solid #b1b0b0; border-width: 0 1px 1px 0; text-align: center; font-size: 6px; line-height: 8px; font-weight: 400; color: #2a1720; font-family: "DejaVu Sans", sans-serif; }
.wells th { background: #dfe0e1; font-size: 8px; font-family: inherit; color: #333; }
.wells thead th { height: 15px; }
.wells .rowhead { width: 14px; }
.wells .sel { position: relative; outline: 3px solid #69b4e4; outline-offset: -1px; }
.legend { padding: 41px 119px 7px 17px; }
.ramp { height: 8px; background: linear-gradient(90deg, #862a8b, #9c2676 12%, #a92a6c 22%, #c84a54 43%, #f57a2e 74%, #fb9b34); }
.ticks { display: grid; grid-template-columns: repeat(6, 37fr) 4fr; padding-left: 11px; margin-top: -4px; font-size: 10px; line-height: 12px; text-align: center; color: #333; }
.ticks span::before { content: ""; display: block; width: 1px; height: 8px; margin: 0 auto; background: #222; }

.result { display: flex; flex-direction: column; }
.dose { height: 32px; padding: 0 5px; gap: 9px; }
.dose .wide { margin-left: 2px; }
.drop { display: flex; align-items: center; gap: 4px; color: #333; }
.dose .drop { margin: 0 2px; }
.dose .drop select { width: 32px; }
.count { margin-left: auto; white-space: nowrap; }
.hist { height: 32px; padding: 0 5px; gap: 9px; }
.hist .drop { width: 138px; margin: 0 3px; }
.hist .drop select { flex: 1; }
.split { display: grid; height: 172px; gap: 1px; }
.dose-split { grid-template-columns: 187fr 185fr; }
.hist-split { grid-template-columns: 301fr 299fr; }
.plot { display: flex; background: #fff; min-width: 0; }
.chart { flex: 1; min-width: 0; height: 172px; overflow: visible; }
.chart text { font-size: 10px; fill: #333; }
.chart .small { font-size: 9px; }
.chart .sup { font-size: 7px; }
.chart .ec { font-size: 10px; fill: #72aedd; }
.marks { width: 22px; display: flex; flex-direction: column; align-items: center; gap: 6px; padding-top: 10px; box-sizing: border-box; background: linear-gradient(#21b2d6, #21b2d6) 0 3px / 2px 49px no-repeat; }
.marks hr { width: 7px; height: 1px; margin: 0; border: 0; background: #c0c0c2; }
.marks .i10 { margin-top: 2px; }
.marks .i12:last-child { margin-top: 6px; }
.grid { position: relative; min-width: 0; overflow: hidden; background: #c9cacd; }
.data { width: 100%; table-layout: fixed; border-collapse: collapse; }
.data th { height: 32px; padding: 0 7px; box-sizing: border-box; text-align: left; white-space: nowrap; background: linear-gradient(#9a9b9e, #9a9b9e) right 1px center / 1px 8px no-repeat; }
.data .up { display: inline-block; width: 8px; height: 9px; vertical-align: middle; }
.data td { height: 16px; padding: 0 7px; box-sizing: border-box; border-bottom: 1px solid #c5c6c8; border-right: 1px dotted #b2b3b5; background: #fff; line-height: 15px; color: #333; }
.data tr:nth-child(even) td { background: #ececed; }
.data .hit td, .data tr.hit:nth-child(even) td { background: #70b4e4; border-right-color: #70b4e4; }
.num th, .num td { text-align: right; }
.num .cut { padding: 0; background: none; }
.w48 { width: 48px; }
.w64 { width: 64px; }
.w59 { width: 59px; }
.w73 { width: 73px; }
.w120 { width: 120px; }
.vbar { position: absolute; right: 0; top: 32px; bottom: 12px; width: 13px; background: #bfc0c3; display: flex; }
.vbar i { flex: 1; background: #f4f4f5; height: 16px; }
.low { align-items: flex-end; }
.hbar { position: absolute; left: 0; right: 0; bottom: 0; height: 12px; background: #f4f4f5; display: flex; }
.hbar i { flex: 1; background: #bdbec1; }
.left { padding: 0 13px; }
.right { padding: 0 13px 0 122px; }

.image { display: flex; flex-direction: column; }
.imaging { height: 32px; padding-left: 5px; }
.imaging button { margin-right: 10px; }
.imaging .sep { width: 1px; height: 16px; background: #a2a3a6; margin-right: 12px; }
.imaging .um { flex-direction: column; width: 18px; font: 14px/10px "Liberation Sans", Arial, sans-serif; color: #3a3a3c; }
.um-bar { height: 6px; margin-bottom: 1px; }
.imaging .boxed { width: 26px; height: 26px; margin: 0 7px 0 -5px; background: #fff; box-shadow: inset 0 0 0 1px #5f9ed6; }
.imaging .letter { font: 25px/26px "Liberation Sans", Arial, sans-serif; color: #808184; }
.imaging .one { margin-right: 6px; font: 18px/20px "Noto Sans", sans-serif; color: #333; }
.imaging > .grow + button { margin-right: 8px; }
.pct { display: flex; align-items: center; width: 71px; height: 19px; box-sizing: border-box; padding: 0 3px; background: #fff; border: 1px solid #b0b1b4; }
.pct select { flex: 1; }
.viewport { display: grid; grid-template-columns: 1fr 13px; height: 339px; }
.field { width: 100%; height: 339px; }
.scroll-v { background: #fff; padding: 12px 0 137px; box-sizing: border-box; display: flex; }
.scroll-v i, .scroll-h i { flex: 1; background: #c6c7c9; }
.scroll-h { height: 12px; background: #fff; padding: 0 20px 0 11px; display: flex; }
.layers { display: flex; align-items: center; height: 19px; padding: 0 4px 0 8px; background: #9d9ea1; }
.layers button { height: 19px; gap: 4px; padding: 0 5px; margin-right: 4px; }
.layers .all { width: 24px; margin-right: 0; padding: 0 8px 0 0; box-sizing: border-box; }
.layers button:nth-child(2) { width: 60px; }
.layers .on { width: 56px; box-sizing: border-box; background: linear-gradient(#1ab0e0, #1ab0e0) 4px 16px / 48px 2px no-repeat #c9cacd; color: #1b76c2; font-weight: 700; margin-right: 0; }
.layers .auto { background: linear-gradient(#21b34c, #21b34c) 4px 16px / 80px 2px no-repeat; }
.sw { width: 9px; height: 9px; flex: none; }
.pale { background: #e4e5e6; }
.cyan { background: #10b4e8; }
.green { background: #18b04a; }

.notes, .lines { position: absolute; inset: 0; pointer-events: none; }
.lines { width: 100%; height: 100%; }
.notes p { position: absolute; white-space: nowrap; color: #414143; font-family: "Liberation Sans", Arial, sans-serif; }
.glow { background: #fff; box-shadow: 0 0 8px 6px #fff; }
.wide-note { left: calc(608 / 1459 * 100%); top: 131px; font-size: 20px; line-height: 25px; font-weight: 700; box-shadow: 0 0 10px 9px #fff; }
.tag { font-size: 19px; line-height: 22px; }
.plate-tag { left: calc(188 / 1459 * 100%); top: 321px; }
.assay-tag { left: calc(188 / 1459 * 100%); top: 587px; }
.link-note { left: calc(950 / 1459 * 100%); width: 170px; top: 401px; text-align: center; font-size: 20px; line-height: 25px; font-weight: 700; }
</style>
